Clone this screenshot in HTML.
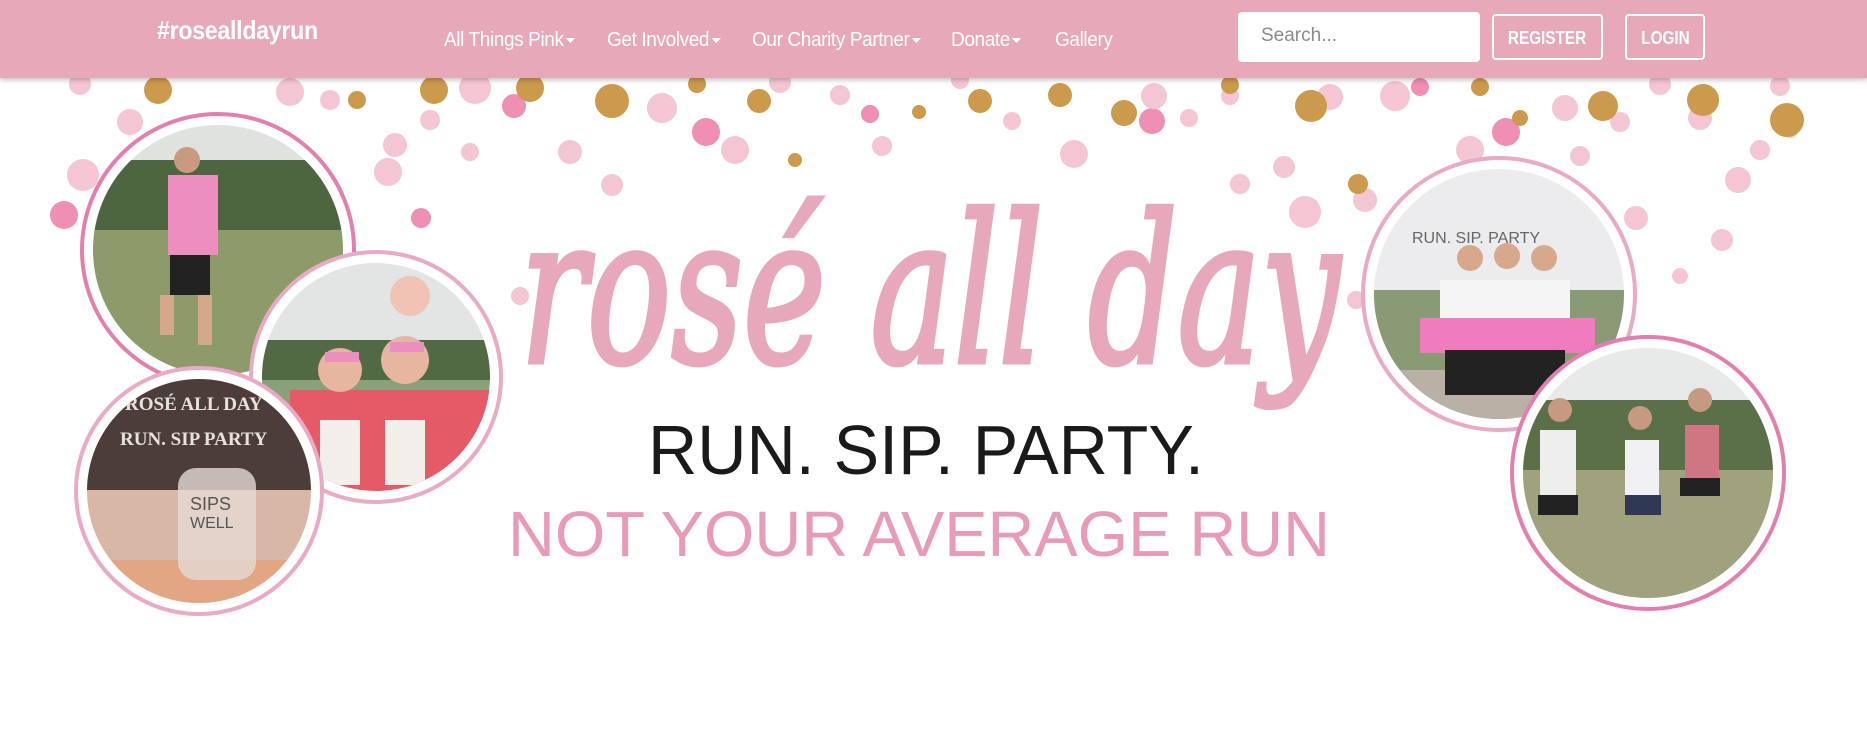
<!DOCTYPE html>
<html><head><meta charset="utf-8"><style>
*{margin:0;padding:0;box-sizing:border-box}
body{width:1867px;height:736px;background:#fff;overflow:hidden;font-family:"Liberation Sans",sans-serif;position:relative}
.nav{position:absolute;left:0;top:0;width:1867px;height:78px;background:#e7a8b8;box-shadow:0 2px 5px rgba(0,0,0,.25);z-index:5}
.logo{position:absolute;left:157px;top:15px;color:#fff;font-weight:bold;font-size:26px;transform:scaleX(.89);transform-origin:left;letter-spacing:-.3px}
.nav a{position:absolute;top:29px;color:#fff;font-size:20px;transform:scaleX(.95);transform-origin:left;white-space:nowrap;letter-spacing:-.4px}
.car{display:inline-block;border-left:5px solid transparent;border-right:5px solid transparent;border-top:5px solid #fff;vertical-align:middle;margin-left:2px}
.search{position:absolute;left:1238px;top:12px;width:242px;height:50px;background:#fff;border-radius:4px;color:#8a8a8a;font-size:19px;padding:13px 0 0 23px}
.btn{position:absolute;top:14px;height:46px;border:2px solid #fff;border-radius:4px;color:#fff;font-weight:bold;font-size:18px;text-align:center;padding-top:12px}
.btn span{display:inline-block;transform:scaleX(.85)}
svg{position:absolute;left:0;top:0}
</style></head><body>
<svg width="1867" height="736" viewBox="0 0 1867 736">
<defs>
<clipPath id="c1"><circle cx="218" cy="250" r="125"/></clipPath>
<clipPath id="c2"><circle cx="376" cy="377" r="114"/></clipPath>
<clipPath id="c3"><circle cx="199" cy="491" r="112"/></clipPath>
<clipPath id="c4"><circle cx="1499" cy="294" r="125"/></clipPath>
<clipPath id="c5"><circle cx="1648" cy="473" r="125"/></clipPath>
</defs>
<rect x="45" y="77" width="1761" height="543" fill="#fff"/>
<g fill="#f4c6d3">
<circle cx="80" cy="84" r="11"/><circle cx="130" cy="122" r="13"/><circle cx="83" cy="175" r="16"/><circle cx="64" cy="215" r="14" fill="#ee8fb3"/><circle cx="290" cy="92" r="14"/><circle cx="330" cy="100" r="10"/><circle cx="395" cy="145" r="12"/><circle cx="430" cy="120" r="10"/><circle cx="470" cy="152" r="9"/><circle cx="421" cy="218" r="10" fill="#ee8fb3"/><circle cx="388" cy="172" r="14"/><circle cx="475" cy="88" r="16"/><circle cx="514" cy="106" r="12" fill="#ee8fb3"/><circle cx="570" cy="152" r="12"/><circle cx="612" cy="185" r="11"/><circle cx="662" cy="108" r="15"/><circle cx="706" cy="132" r="14" fill="#ee8fb3"/><circle cx="735" cy="150" r="14"/><circle cx="780" cy="82" r="11"/><circle cx="840" cy="95" r="10"/><circle cx="870" cy="114" r="9" fill="#ee8fb3"/><circle cx="882" cy="146" r="10"/><circle cx="960" cy="80" r="9"/><circle cx="1012" cy="121" r="9"/><circle cx="1074" cy="154" r="14"/><circle cx="1152" cy="121" r="13" fill="#ee8fb3"/><circle cx="1189" cy="118" r="9"/><circle cx="1240" cy="184" r="10"/><circle cx="1284" cy="167" r="11"/><circle cx="1305" cy="212" r="16"/><circle cx="1330" cy="97" r="13"/><circle cx="1365" cy="200" r="12"/><circle cx="1395" cy="96" r="15"/><circle cx="1420" cy="87" r="9" fill="#ee8fb3"/><circle cx="1470" cy="150" r="14"/><circle cx="1506" cy="132" r="14" fill="#ee8fb3"/><circle cx="1565" cy="108" r="13"/><circle cx="1580" cy="156" r="10"/><circle cx="1636" cy="218" r="12"/><circle cx="1660" cy="84" r="11"/><circle cx="1700" cy="118" r="12"/><circle cx="1738" cy="180" r="13"/><circle cx="1760" cy="150" r="10"/><circle cx="1722" cy="240" r="11"/><circle cx="1780" cy="86" r="10"/><circle cx="1790" cy="130" r="8"/><circle cx="1680" cy="276" r="8"/><circle cx="1620" cy="122" r="10"/><circle cx="520" cy="296" r="9"/><circle cx="1154" cy="96" r="13"/><circle cx="1230" cy="96" r="9"/><circle cx="1356" cy="300" r="9"/>
</g>
<g fill="#cc9a4c">
<circle cx="158" cy="90" r="14"/><circle cx="357" cy="100" r="9"/><circle cx="434" cy="90" r="14"/><circle cx="530" cy="88" r="14"/><circle cx="612" cy="101" r="17"/><circle cx="697" cy="84" r="9"/><circle cx="759" cy="101" r="12"/><circle cx="795" cy="160" r="7"/><circle cx="919" cy="112" r="7"/><circle cx="980" cy="101" r="12"/><circle cx="1060" cy="95" r="12"/><circle cx="1124" cy="113" r="13"/><circle cx="1230" cy="85" r="9"/><circle cx="1311" cy="106" r="16"/><circle cx="1358" cy="184" r="10"/><circle cx="1480" cy="87" r="9"/><circle cx="1520" cy="118" r="8"/><circle cx="1603" cy="106" r="15"/><circle cx="1703" cy="100" r="16"/><circle cx="1787" cy="120" r="17"/>
</g>
<circle cx="218" cy="250" r="136" fill="#fff" stroke="#e27fae" stroke-width="4"/>
<g clip-path="url(#c1)"><rect x="90" y="120" width="260" height="260" fill="#dfe2df"/><rect x="90" y="160" width="260" height="70" fill="#4d6640"/><rect x="90" y="230" width="260" height="150" fill="#8d9a6a"/><rect x="168" y="175" width="50" height="80" fill="#ec8fc0"/><rect x="170" y="255" width="40" height="40" fill="#222"/><rect x="160" y="295" width="14" height="40" fill="#d6a88a"/><rect x="198" y="295" width="14" height="50" fill="#d6a88a"/><circle cx="187" cy="160" r="13" fill="#c99a80"/></g>
<circle cx="376" cy="377" r="125" fill="#fff" stroke="#e8aac4" stroke-width="4"/>
<g clip-path="url(#c2)"><rect x="250" y="250" width="260" height="260" fill="#e3e4e4"/><rect x="250" y="340" width="260" height="40" fill="#526a44"/><rect x="250" y="380" width="260" height="40" fill="#8aa07a"/><rect x="290" y="390" width="200" height="120" fill="#e45a66"/><rect x="320" y="420" width="40" height="65" fill="#f2eeea"/><rect x="385" y="420" width="40" height="65" fill="#f2eeea"/><circle cx="340" cy="370" r="22" fill="#e6b6a0"/><circle cx="405" cy="360" r="24" fill="#e6b6a0"/><rect x="325" y="352" width="34" height="10" fill="#eb8fc0"/><rect x="390" y="342" width="34" height="10" fill="#eb8fc0"/><circle cx="410" cy="296" r="20" fill="#f1c3b5"/></g>
<circle cx="199" cy="491" r="123" fill="#fff" stroke="#e8aac4" stroke-width="4"/>
<g clip-path="url(#c3)"><rect x="80" y="370" width="240" height="120" fill="#4d3d3a"/><rect x="80" y="490" width="240" height="120" fill="#d9b7a6"/><rect x="80" y="560" width="240" height="50" fill="#e2a685"/><text x="125" y="410" fill="#e8e2dc" font-family="Liberation Serif" font-weight="bold" font-size="19">ROSÉ ALL DAY</text><text x="120" y="445" fill="#e8e2dc" font-family="Liberation Serif" font-weight="bold" font-size="19">RUN. SIP PARTY</text><rect x="178" y="468" width="78" height="112" rx="18" fill="#e5dad4" opacity=".8"/><text x="190" y="510" fill="#555" font-size="18">SIPS</text><text x="190" y="528" fill="#555" font-size="16">WELL</text></g>
<circle cx="1499" cy="294" r="136" fill="#fff" stroke="#e8aac4" stroke-width="4"/>
<g clip-path="url(#c4)"><rect x="1370" y="160" width="260" height="260" fill="#ecebed"/><rect x="1370" y="290" width="260" height="130" fill="#8a9a74"/><rect x="1400" y="370" width="200" height="50" fill="#b9b1a6"/><rect x="1440" y="280" width="130" height="40" fill="#f5f5f5"/><rect x="1420" y="318" width="175" height="35" fill="#f07cc0"/><rect x="1445" y="350" width="120" height="45" fill="#222"/><circle cx="1470" cy="258" r="13" fill="#d7a88c"/><circle cx="1507" cy="256" r="13" fill="#d7a88c"/><circle cx="1544" cy="258" r="13" fill="#d7a88c"/><text x="1412" y="243" fill="#666" font-size="16">RUN. SIP. PARTY</text></g>
<circle cx="1648" cy="473" r="136" fill="#fff" stroke="#e27fae" stroke-width="4"/>
<g clip-path="url(#c5)"><rect x="1520" y="340" width="260" height="260" fill="#e8e9e9"/><rect x="1520" y="400" width="260" height="70" fill="#5b7048"/><rect x="1520" y="470" width="260" height="140" fill="#9fa27c"/><rect x="1540" y="430" width="36" height="70" fill="#eee"/><rect x="1625" y="440" width="34" height="60" fill="#f1f1f4"/><rect x="1685" y="425" width="34" height="55" fill="#d07682"/><rect x="1538" y="495" width="40" height="20" fill="#222"/><rect x="1625" y="495" width="36" height="20" fill="#2e3a55"/><rect x="1680" y="478" width="40" height="18" fill="#222"/><circle cx="1560" cy="410" r="12" fill="#c59a80"/><circle cx="1640" cy="418" r="12" fill="#c59a80"/><circle cx="1700" cy="400" r="12" fill="#c59a80"/></g>
<text x="520" y="362" fill="#e8a8bc" stroke="#e8a8bc" stroke-width="5" font-family="DejaVu Serif,Liberation Serif,serif" font-style="italic" font-size="205" textLength="820" lengthAdjust="spacingAndGlyphs">rosé all day</text>
<text x="648" y="474" fill="#1a1a1a" font-family="Liberation Sans,sans-serif" font-size="70" textLength="556" lengthAdjust="spacingAndGlyphs">RUN. SIP. PARTY.</text>
<text x="508" y="556" fill="#e79bb8" font-family="Liberation Sans,sans-serif" font-size="64" textLength="822" lengthAdjust="spacingAndGlyphs">NOT YOUR AVERAGE RUN</text>
</svg>
<div class="nav">
<div class="logo">#rosealldayrun</div>
<a style="left:444px">All Things Pink<span class="car"></span></a>
<a style="left:607px">Get Involved<span class="car"></span></a>
<a style="left:752px">Our Charity Partner<span class="car"></span></a>
<a style="left:951px">Donate<span class="car"></span></a>
<a style="left:1055px">Gallery</a>
<div class="search">Search...</div>
<div class="btn" style="left:1492px;width:111px"><span>REGISTER</span></div>
<div class="btn" style="left:1625px;width:80px"><span>LOGIN</span></div>
</div>
</body></html>
